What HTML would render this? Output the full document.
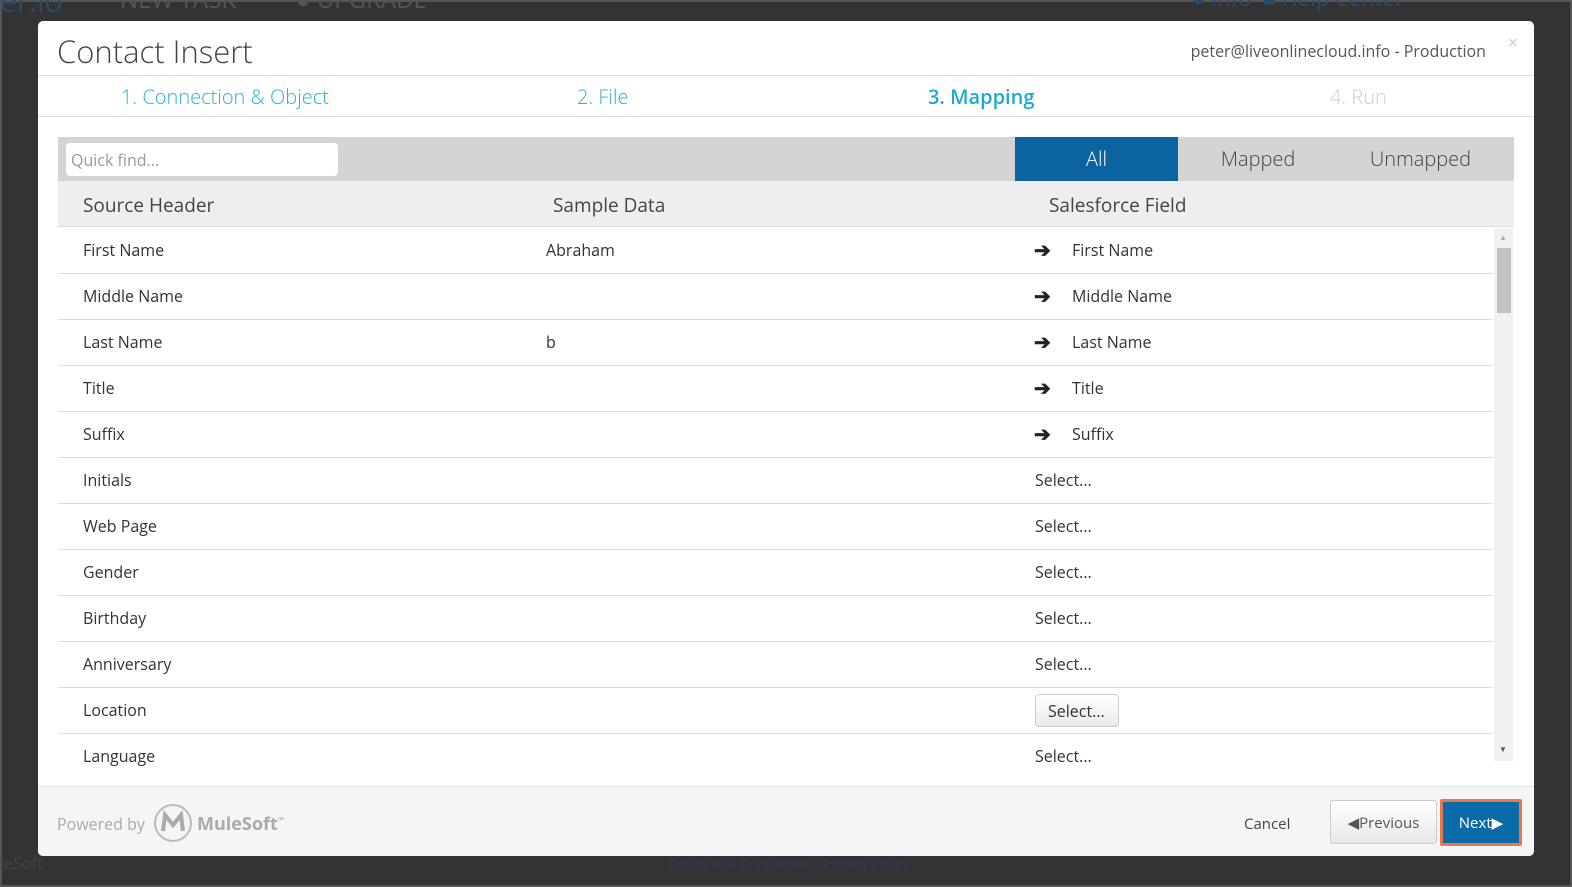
<!DOCTYPE html>
<html><head><meta charset="utf-8"><style>
*{box-sizing:border-box;margin:0;padding:0}
body{width:1572px;height:887px;background:#333;font-family:"Open Sans","Liberation Sans",sans-serif;color:#333;position:relative;overflow:hidden}
.abs{position:absolute}
.modal{position:absolute;left:38px;top:21px;width:1496px;height:835px;background:#fff;border-radius:5px;overflow:hidden}
.title{position:absolute;left:19px;top:10px;font-size:31px;font-weight:300;color:#444}
.user{position:absolute;right:48px;top:19px;font-size:16px;color:#555}
.x{position:absolute;right:16px;top:10px;font-size:18px;color:#ccc}
.hl{position:absolute;left:0;right:0;height:1px;background:#ddd}
.step{position:absolute;top:62px;font-size:20px;font-weight:300}
.tb{position:absolute;left:20px;top:116px;width:1456px;height:44px;background:#d4d4d4}
.qf{position:absolute;left:8px;top:6px;width:272px;height:33px;background:#fff;border-radius:4px;font-size:16px;color:#999;padding:6px 5px}
.tab{position:absolute;top:0;height:44px;font-size:20px;font-weight:300;text-align:center;line-height:44px;color:#444}
.th{position:absolute;left:20px;top:160px;width:1456px;height:46px;background:#eee;border-bottom:1px solid #ddd;font-size:19px;color:#444}
.th span{position:absolute;top:11px}
.row{position:absolute;left:20px;width:1435px;height:46px;border-bottom:1px solid #ddd;font-size:16px}
.row span{position:absolute;top:11px}
.row span.ar{font-size:20px;top:8px;font-weight:bold;color:#222}
.sb{position:absolute;left:1456px;top:207px;width:19px;height:533px;background:#f1f1f1}
.foot{position:absolute;left:0;top:765px;width:1496px;height:70px;background:#f5f5f5;border-top:1px solid #e3e3e3}
.btn{position:absolute;border-radius:3px;font-size:15px;text-align:center}
</style></head><body>
<div class="abs" style="left:0;top:0;width:1572px;height:887px;border:2px solid #555"></div>
<div class="abs" style="left:0;top:-20px;font-size:30px;color:#2a4a6a">er.io</div>
<div class="abs" style="left:120px;top:-17px;font-size:24px;color:#555">NEW TASK</div>
<div class="abs" style="left:296px;top:-17px;font-size:24px;color:#555">● UPGRADE</div>
<div class="abs" style="left:1192px;top:-17px;font-size:22px;color:#2a4a6a">● Info &nbsp;■ Help Center</div>
<div class="abs" style="left:0;top:852px;font-size:16px;color:#444">leSoft</div>
<div class="abs" style="left:667px;top:855px;font-size:14px;color:#2a3a5a">Terms and Conditions - Privacy Policy</div>
<div class="modal">
 <div class="title">Contact Insert</div>
 <div class="user">peter@liveonlinecloud.info - Production</div>
 <div class="x">×</div>
 <div class="hl" style="top:54px"></div>
 <div class="step" style="left:83px;color:#2ab0d8">1. Connection &amp; Object</div>
 <div class="step" style="left:539px;color:#2ab0d8">2. File</div>
 <div class="step" style="left:890px;color:#1ea8d4;font-weight:600">3. Mapping</div>
 <div class="step" style="left:1292px;color:#ccc">4. Run</div>
 <div class="hl" style="top:95px"></div>
 <div class="tb"><div class="qf">Quick find...</div>
  <div class="tab" style="left:957px;width:163px;background:#0b63a0;color:#fff">All</div>
  <div class="tab" style="left:1120px;width:160px">Mapped</div>
  <div class="tab" style="left:1280px;width:165px">Unmapped</div>
 </div>
 <div class="th"><span style="left:25px">Source Header</span><span style="left:495px">Sample Data</span><span style="left:991px">Salesforce Field</span></div>
 <div class="row" style="top:207px"><span style="left:25px">First Name</span><span style="left:488px">Abraham</span><span class="ar" style="left:976px">➔</span><span style="left:1014px">First Name</span></div>
 <div class="row" style="top:253px"><span style="left:25px">Middle Name</span><span class="ar" style="left:976px">➔</span><span style="left:1014px">Middle Name</span></div>
 <div class="row" style="top:299px"><span style="left:25px">Last Name</span><span style="left:488px">b</span><span class="ar" style="left:976px">➔</span><span style="left:1014px">Last Name</span></div>
 <div class="row" style="top:345px"><span style="left:25px">Title</span><span class="ar" style="left:976px">➔</span><span style="left:1014px">Title</span></div>
 <div class="row" style="top:391px"><span style="left:25px">Suffix</span><span class="ar" style="left:976px">➔</span><span style="left:1014px">Suffix</span></div>
 <div class="row" style="top:437px"><span style="left:25px">Initials</span><span style="left:977px">Select...</span></div>
 <div class="row" style="top:483px"><span style="left:25px">Web Page</span><span style="left:977px">Select...</span></div>
 <div class="row" style="top:529px"><span style="left:25px">Gender</span><span style="left:977px">Select...</span></div>
 <div class="row" style="top:575px"><span style="left:25px">Birthday</span><span style="left:977px">Select...</span></div>
 <div class="row" style="top:621px"><span style="left:25px">Anniversary</span><span style="left:977px">Select...</span></div>
 <div class="row" style="top:667px"><span style="left:25px">Location</span><div style="position:absolute;left:977px;top:6px;width:84px;height:33px;border:1px solid #ccc;border-radius:4px;background:linear-gradient(#fff,#eaeaea);padding:5px 12px">Select...</div></div>
 <div class="row" style="top:713px;border:none"><span style="left:25px">Language</span><span style="left:977px">Select...</span></div>
 <div class="sb"><div style="position:absolute;left:3px;top:20px;width:14px;height:65px;background:#c1c1c1"></div><div style="position:absolute;left:5px;top:4px;font-size:8px;color:#aaa">▲</div><div style="position:absolute;left:5px;top:516px;font-size:8px;color:#555">▼</div></div>
 <div class="foot">
  <div class="abs" style="left:19px;top:26px;font-size:16px;color:#aaa">Powered by</div>
  <svg class="abs" style="left:115px;top:16px" width="40" height="40" viewBox="0 0 40 40"><circle cx="20" cy="20" r="18" fill="none" stroke="#bbb" stroke-width="2"/><path d="M10 28 L12 12 L20 22 L28 12 L30 28" fill="none" stroke="#aaa" stroke-width="4"/></svg>
  <div class="abs" style="left:159px;top:25px;font-size:18px;color:#aaa;font-weight:bold">MuleSoft<sup style="font-size:8px">™</sup></div>
  <div class="abs" style="left:1206px;top:27px;font-size:15px;color:#444">Cancel</div>
  <div class="btn" style="left:1292px;top:13px;width:107px;height:44px;border:1px solid #ccc;background:linear-gradient(#fff,#e8e8e8);color:#555;padding-top:12px">◀Previous</div>
  <div class="btn" style="left:1402px;top:12px;width:82px;height:47px;border:3px solid #e8784a;background:#0b6aa8;color:#fff;padding-top:11px;border-radius:2px">Next▶</div>
 </div>
</div>
</body></html>
